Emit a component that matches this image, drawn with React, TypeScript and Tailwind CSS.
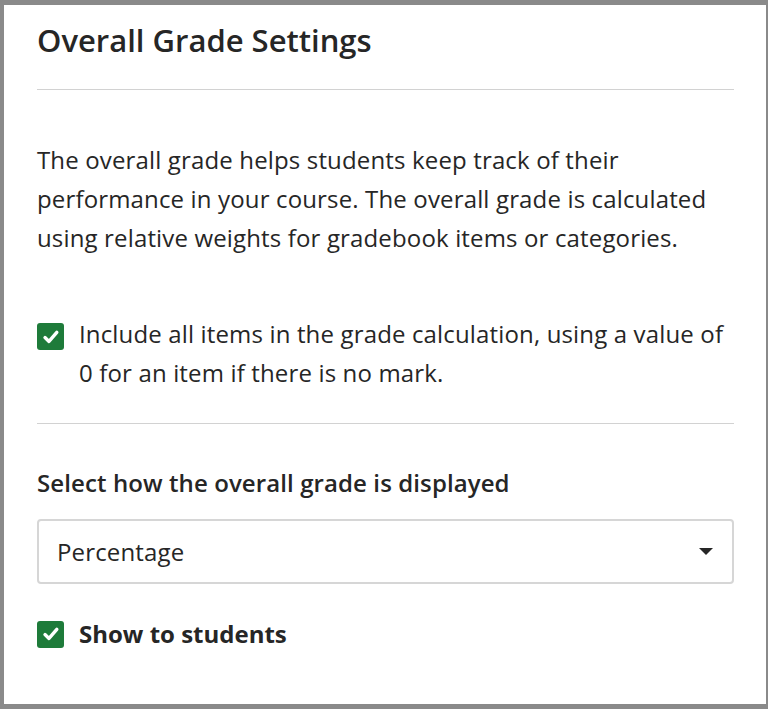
function CheckBox() {
  return (
    <span className="w-[27px] h-[27px] rounded-[3px] bg-[#1e7b3a] flex items-center justify-center shrink-0">
      <svg width="18" height="16" viewBox="0 0 18 16" fill="none">
        <path
          d="M3 8.6 L7 12.4 L14.8 3.4"
          stroke="white"
          strokeWidth="3.4"
          strokeLinecap="round"
          strokeLinejoin="round"
        />
      </svg>
    </span>
  );
}

export default function App() {
  return (
    <div
      className="w-[768px] h-[709px] bg-white border-t-[5px] border-l-4 border-r-2 border-b-[5px] border-[#8a8a8a] text-[#262626] overflow-hidden"
      style={{ fontFamily: '"Open Sans", "Liberation Sans", sans-serif' }}
    >
      <div className="pl-[33px] pr-[32px]">
        <h1 className="text-[31px] font-semibold leading-[40px] pt-[15px] pb-[29px] border-b border-[#d2d2d2]">
          Overall Grade Settings
        </h1>

        <p className="text-[24px] tracking-[0.15px] leading-[39px] pt-[50px] pb-[63px]">
          The overall grade helps students keep track of their performance in your course. The overall grade is calculated using relative weights for gradebook items or categories.
        </p>

        <label className="flex items-start gap-[15px] pb-[31px] border-b border-[#d2d2d2]">
          <span className="pt-[3px]">
            <CheckBox />
          </span>
          <span className="text-[24px] tracking-[0.15px] leading-[39px] -mt-[6px]">
            Include all items in the grade calculation, using a value of 0 for an item if there is no mark.
          </span>
        </label>

        <h2 className="text-[24px] font-semibold tracking-[0.1px] leading-[32px] pt-[43px] pb-[20px]">
          Select how the overall grade is displayed
        </h2>

        <div className="h-[65px] rounded-[4px] border-2 border-[#d6d6d6] flex items-center justify-between pl-[18px] pr-[18px]">
          <span className="text-[24px] tracking-[0.15px]">Percentage</span>
          <svg width="16" height="8" viewBox="0 0 16 8">
            <path d="M1 0 L15 0 L8 7 Z" fill="#262626" />
          </svg>
        </div>

        <label className="flex items-center gap-[15px] pt-[32px]">
          <CheckBox />
          <span className="text-[24px] font-bold">Show to students</span>
        </label>
      </div>
    </div>
  );
}
